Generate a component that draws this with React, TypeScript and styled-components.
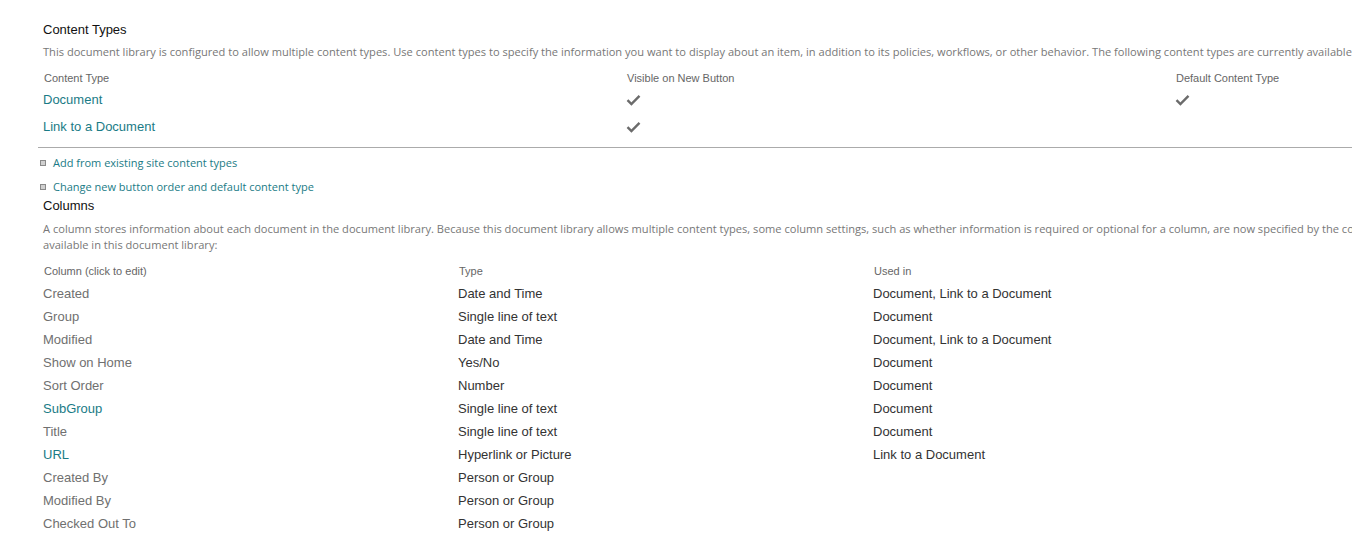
import styled, { createGlobalStyle } from "styled-components";

const GlobalStyle = createGlobalStyle`
  html, body {
    margin: 0;
    padding: 0;
    background: #fff;
    overflow: hidden;
  }
`;

const contentTypes = [
  { name: "Document", visible: true, isDefault: true },
  { name: "Link to a Document", visible: true, isDefault: false },
];

const columns = [
  { name: "Created", type: "Date and Time", usedIn: "Document, Link to a Document", link: false },
  { name: "Group", type: "Single line of text", usedIn: "Document", link: false },
  { name: "Modified", type: "Date and Time", usedIn: "Document, Link to a Document", link: false },
  { name: "Show on Home", type: "Yes/No", usedIn: "Document", link: false },
  { name: "Sort Order", type: "Number", usedIn: "Document", link: false },
  { name: "SubGroup", type: "Single line of text", usedIn: "Document", link: true },
  { name: "Title", type: "Single line of text", usedIn: "Document", link: false },
  { name: "URL", type: "Hyperlink or Picture", usedIn: "Link to a Document", link: true },
  { name: "Created By", type: "Person or Group", usedIn: "", link: false },
  { name: "Modified By", type: "Person or Group", usedIn: "", link: false },
  { name: "Checked Out To", type: "Person or Group", usedIn: "", link: false },
];

const Check = () => (
  <svg width="15" height="12" viewBox="0 0 15 12">
    <path d="M1.5 6.2 L5.4 10 L13.5 1.8" fill="none" stroke="#6b6b6b" strokeWidth="2.4" />
  </svg>
);

export default function App() {
  return (
    <Page>
      <GlobalStyle />
      <Section>
        <Heading>Content Types</Heading>
        <Description>
          This document library is configured to allow multiple content types. Use content types to specify the information you
          want to display about an item, in addition to its policies, workflows, or other behavior. The following content types are
          currently available in this library:
        </Description>
        <Table $cols="583px 549px 1fr" $headGap={0}>
          <HeadCell>Content Type</HeadCell>
          <HeadCell>Visible on New Button</HeadCell>
          <HeadCell>Default Content Type</HeadCell>
          {contentTypes.map((ct) => (
            <Row key={ct.name} $height={27}>
              <Cell $link>{ct.name}</Cell>
              <Cell>{ct.visible && <Check />}</Cell>
              <Cell>{ct.isDefault && <Check />}</Cell>
            </Row>
          ))}
        </Table>
      </Section>
      <Divider />
      <Actions>
        <Action>
          <Bullet />
          <ActionLink>Add from existing site content types</ActionLink>
        </Action>
        <Action>
          <Bullet />
          <ActionLink>Change new button order and default content type</ActionLink>
        </Action>
      </Actions>
      <Section $top={1}>
        <Heading>Columns</Heading>
        <Description $gap={5}>
          A column stores information about each document in the document library. Because this document library allows multiple
          content types, some column settings, such as whether information is required or optional for a column, are now specified by
          the content type of the document. The following columns are currently
          <br />
          available in this document library:
        </Description>
        <Table $cols="415px 415px 1fr" $headGap={3}>
          <HeadCell>Column (click to edit)</HeadCell>
          <HeadCell>Type</HeadCell>
          <HeadCell>Used in</HeadCell>
          {columns.map((c) => (
            <Row key={c.name} $height={23}>
              <Cell $link={c.link} $muted={!c.link}>{c.name}</Cell>
              <Cell>{c.type}</Cell>
              <Cell>{c.usedIn}</Cell>
            </Row>
          ))}
        </Table>
      </Section>
    </Page>
  );
}

const Page = styled.div`
  width: 1800px;
  padding: 20px 0 0 38px;
  font-family: "Liberation Sans", Arial, sans-serif;
  color: #333;
`;

const Section = styled.div<{ $top?: number }>`
  padding-left: 5px;
  margin-top: ${(p) => p.$top ?? 0}px;
`;

const Heading = styled.h2`
  margin: 0;
  font-size: 13px;
  font-weight: normal;
  line-height: 20px;
  color: #111;
`;

const Description = styled.p<{ $gap?: number }>`
  margin: ${(p) => p.$gap ?? 4}px 0 0;
  font-family: "Open Sans", "Noto Sans", sans-serif;
  font-size: 11.1px;
  line-height: 16px;
  color: #777;
  white-space: nowrap;
`;

const Table = styled.div<{ $cols: string; $headGap: number }>`
  display: grid;
  grid-template-columns: ${(p) => p.$cols};
  margin-top: 10px;
  padding-left: 1px;
  --head-gap: ${(p) => p.$headGap}px;
`;

const HeadCell = styled.div`
  font-size: 11px;
  line-height: 16px;
  padding-bottom: var(--head-gap);
  color: #666;
`;

const Row = styled.div<{ $height: number }>`
  display: contents;
  & > div {
    height: ${(p) => p.$height}px;
  }
`;

const Cell = styled.div<{ $link?: boolean; $muted?: boolean }>`
  display: flex;
  align-items: center;
  margin-left: -1px;
  font-size: 13px;
  color: ${(p) => (p.$link ? "#1a7b86" : p.$muted ? "#707070" : "#333")};
`;

const Divider = styled.hr`
  margin: 7px 0 0;
  border: 0;
  border-top: 1px solid #ababab;
  height: 0;
`;

const Actions = styled.div`
  display: flex;
  flex-direction: column;
  gap: 8px;
  padding-top: 7px;
`;

const Action = styled.div`
  display: flex;
  align-items: center;
  gap: 7px;
  padding-left: 2px;
  line-height: 16px;
`;

const Bullet = styled.span`
  width: 4px;
  height: 4px;
  border: 1px solid #8a8a8a;
  background: #d0d0d0;
`;

const ActionLink = styled.a`
  font-family: "Open Sans", "Noto Sans", sans-serif;
  font-size: 11px;
  color: #1a7b86;
  cursor: pointer;
`;
